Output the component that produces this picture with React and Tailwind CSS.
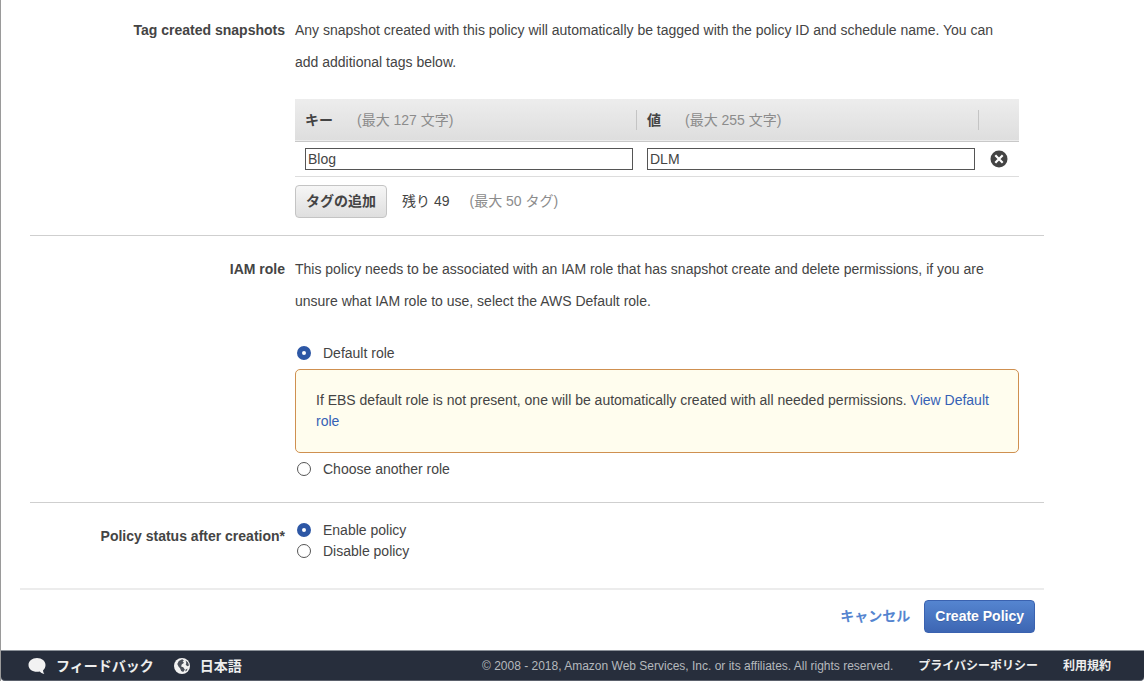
import React, { useState } from 'react';

const columns = [
  { id: 'key', title: 'キー', hint: '(最大 127 文字)' },
  { id: 'value', title: '値', hint: '(最大 255 文字)' },
];

function Section({ label, children, className = '', labelClass = 'leading-8' }) {
  return (
    <section className={`ml-[10px] flex gap-[10px] border-[#cfcfcf] pr-[25px] ${className}`}>
      <h2 className={`w-[255px] shrink-0 text-right font-bold ${labelClass}`}>{label}</h2>
      <div className="min-w-0 flex-1">{children}</div>
    </section>
  );
}

function Radio({ name, value, selected, onSelect, children }) {
  return (
    <label className="flex items-center gap-3 pl-[2px] leading-[21px]">
      <input
        type="radio"
        name={name}
        value={value}
        checked={selected === value}
        onChange={() => onSelect(value)}
        className="h-[14px] w-[14px] appearance-none rounded-full border border-[#555] bg-white checked:border-5 checked:border-[#2d57a5]"
      />
      {children}
    </label>
  );
}

function RemoveIcon() {
  return (
    <svg width="18" height="18" viewBox="0 0 18 18" fill="none">
      <circle cx="9" cy="9" r="8.5" fill="#444" />
      <path d="M5.3 5.3l7.4 7.4M12.7 5.3l-7.4 7.4" stroke="#fff" strokeWidth="2.2" />
    </svg>
  );
}

function BubbleIcon() {
  return (
    <svg width="18" height="18" viewBox="0 0 18 18" fill="#f2f2f2">
      <path d="M9 1C4.200 1 .5 4 .5 7.900s3.700 6.900 8.500 6.900c1 0 1.900-.1 2.700-.3 1 1.200 2.300 2.200 4.600 2.400-.8-1-1.300-2.200-1.200-3.600 1.500-1.300 2.400-3.200 2.400-5.400C17.500 4 13.800 1 9 1z" />
    </svg>
  );
}

function GlobeIcon() {
  return (
    <svg width="18" height="18" viewBox="0 0 18 18">
      <circle cx="9" cy="9" r="8" fill="#f2f2f2" />
      <path d="M9.200 2.200l1.700 1.200-1.300 1.300 1.500 1-2.400 1.800-.6 1.900 2.200.8 1.600 2.600-1.700 2.300-2-1.200-1.200-2.600L5.500 9.400 4.300 6.900l1.500-3z" fill="#4b505a" />
      <path d="M12.600 3.600l2.500 2 .9 2.900-1.600.8-1.700-1.600.6-1.600z" fill="#4b505a" />
      <path d="M12.500 12.800l2-1.200-.6 2-1.500 1z" fill="#4b505a" />
    </svg>
  );
}

export default function App() {
  const [tag, setTag] = useState({ key: 'Blog', value: 'DLM' });
  const [role, setRole] = useState('default');
  const [status, setStatus] = useState('enable');

  return (
    <div className="flex min-h-screen flex-col border-l border-[#9a9a9a] bg-white font-['Liberation_Sans','Noto_Sans_CJK_JP',sans-serif] text-sm text-[#444]">
      <main className="pr-[100px] pl-[19px]">
        <Section label="Tag created snapshots" className="border-b pt-[14px] pb-[17px]">
          <p className="leading-8">
            Any snapshot created with this policy will automatically be tagged with the policy ID and schedule name. You can
            add additional tags below.
          </p>
          <table className="mt-[21px] w-full table-fixed border-collapse">
            <thead>
              <tr className="h-[42px] border-b border-[#c8c8c8] bg-linear-to-b from-[#ededed] to-[#dedede]">
                {columns.map((col) => (
                  <th key={col.id} className="p-0 text-left">
                    <div className="flex h-5 items-center gap-6 border-r border-[#c4c4c4] pl-[10px]">
                      <span>{col.title}</span>
                      <span className="font-normal text-[#8c8c8c]">{col.hint}</span>
                    </div>
                  </th>
                ))}
                <th className="w-[40px] p-0" aria-label="Remove" />
              </tr>
            </thead>
            <tbody>
              <tr className="h-[35px] border-b border-[#ddd]">
                {columns.map((col) => (
                  <td key={col.id} className="p-0 pr-1 pl-[10px]">
                    <input
                      type="text"
                      aria-label={col.title}
                      value={tag[col.id]}
                      onChange={(e) => setTag({ ...tag, [col.id]: e.target.value })}
                      className="block h-[22px] w-full border border-[#555] px-[2px] leading-5"
                    />
                  </td>
                ))}
                <td className="p-0 pl-[11px]">
                  <button type="button" aria-label="Remove tag" className="block">
                    <RemoveIcon />
                  </button>
                </td>
              </tr>
            </tbody>
          </table>
          <div className="mt-2 flex items-center">
            <button
              type="button"
              className="h-[33px] rounded border border-[#c4c4c4] bg-linear-to-b from-[#f6f6f6] to-[#dfdfdf] px-[10px] font-bold"
            >
              タグの追加
            </button>
            <span className="ml-[15px]">残り 49</span>
            <span className="ml-5 text-[#8c8c8c]">(最大 50 タグ)</span>
          </div>
        </Section>

        <Section label="IAM role" className="border-b pt-[17px] pb-[22px]">
          <p className="leading-8">
            This policy needs to be associated with an IAM role that has snapshot create and delete permissions, if you are
            unsure what IAM role to use, select the AWS Default role.
          </p>
          <div className="mt-[26px]">
            <Radio name="role" value="default" selected={role} onSelect={setRole}>
              Default role
            </Radio>
          </div>
          <div className="mt-[5px] mb-[6px] rounded-[5px] border border-[#cf9050] bg-[#fffdee] p-5 leading-[21px]">
            If EBS default role is not present, one will be automatically created with all needed permissions.{' '}
            <a href="#default-role" className="text-[#3561b5]">
              View Default role
            </a>
          </div>
          <Radio name="role" value="other" selected={role} onSelect={setRole}>
            Choose another role
          </Radio>
        </Section>

        <Section label="Policy status after creation*" className="pt-[17px] pb-[26px]" labelClass="pt-[6px] leading-[21px]">
          <Radio name="status" value="enable" selected={status} onSelect={setStatus}>
            Enable policy
          </Radio>
          <Radio name="status" value="disable" selected={status} onSelect={setStatus}>
            Disable policy
          </Radio>
        </Section>

        <div className="flex items-center justify-end gap-[14px] border-t-2 border-[#ececec] pt-[10px] pr-[9px] pb-[17px]">
          <a href="#cancel" className="font-bold text-[#5585d0]">
            キャンセル
          </a>
          <button
            type="button"
            className="h-[33px] rounded border border-[#3a62b0] bg-linear-to-b from-[#5585d0] to-[#3d66b3] px-[10px] font-bold text-white text-shadow-2xs"
          >
            Create Policy
          </button>
        </div>
      </main>

      <footer className="mt-auto flex h-[31px] items-center rounded-b border-y border-t-[#8c9299] border-b-[#5a606b] bg-[#272e3c] pr-[33px] pl-[27px] text-xs font-bold text-[#eee]">
        <a href="#feedback" className="flex items-center gap-[10px] text-sm">
          <BubbleIcon />
          フィードバック
        </a>
        <button type="button" className="ml-[19px] flex items-center gap-[9px] text-sm">
          <GlobeIcon />
          日本語
        </button>
        <span className="ml-auto font-normal text-[#b5b9bd]">
          © 2008 - 2018, Amazon Web Services, Inc. or its affiliates. All rights reserved.
        </span>
        <a href="#privacy" className="ml-[25px]">
          プライバシーポリシー
        </a>
        <a href="#terms" className="ml-[25px]">
          利用規約
        </a>
      </footer>
    </div>
  );
}
